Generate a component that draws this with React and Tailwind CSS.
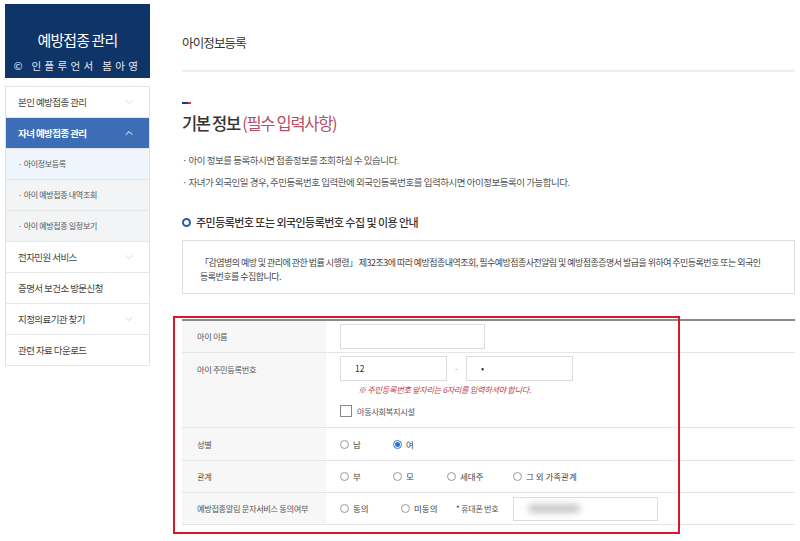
import { ChevronDown, ChevronUp } from 'lucide-react';

const font = { fontFamily: '"Noto Sans CJK KR", "Noto Sans", sans-serif' };

const menu = [
  { label: '본인 예방접종 관리', chevron: 'down' },
  { label: '자녀 예방접종 관리', chevron: 'up', active: true },
  { label: '아이정보등록', sub: true, current: true },
  { label: '아이 예방접종 내역조회', sub: true },
  { label: '아이 예방접종 일정보기', sub: true },
  { label: '전자민원 서비스', chevron: 'down' },
  { label: '증명서 보건소 방문신청' },
  { label: '지정의료기관 찾기', chevron: 'down' },
  { label: '관련 자료 다운로드' },
];

const Sidebar = () => (
  <aside className="w-[145px] shrink-0">
    <div className="h-[74px] bg-[#0f3568] flex flex-col items-center text-white">
      <div className="mt-[26px] text-[15px] leading-[20px] tracking-[-0.06em]">예방접종 관리</div>
      <div className="mt-[9px] text-[10.5px] leading-[14px] tracking-[0.32em] text-[#e4e9f1] whitespace-nowrap">© 인플루언서 봄아영</div>
    </div>
    <ul className="mt-[8px] border border-[#e3e3e3] border-b-0">
      {menu.map((m) => (
        <li
          key={m.label}
          className={
            'h-[31px] flex items-center justify-between border-b border-[#e6e6e6] ' +
            (m.active
              ? 'bg-[#3d6db5] text-white font-bold pl-[12px] pr-[14px] text-[9.5px] tracking-[-0.06em]'
              : m.sub
              ? (m.current ? 'bg-[#eef5fc]' : 'bg-[#f3f4f6]') + ' pl-[12px] text-[8px] text-[#555] tracking-[-0.04em]'
              : 'bg-white pl-[12px] pr-[14px] text-[9.5px] text-[#444] tracking-[-0.06em]')
          }
        >
          <span>{m.sub ? '· ' : ''}{m.label}</span>
          {m.chevron === 'down' && <ChevronDown size={12} strokeWidth={1} className="text-[#b5b5b5]" />}
          {m.chevron === 'up' && <ChevronUp size={12} strokeWidth={2} className="text-white" />}
        </li>
      ))}
    </ul>
  </aside>
);

const Radio = ({ checked, label, w }) => (
  <label className={'flex items-center gap-[4px] ' + w}>
    <span
      className={
        'w-[9px] h-[9px] rounded-full border flex items-center justify-center bg-white ' +
        (checked ? 'border-[#3b74c9]' : 'border-[#999]')
      }
    >
      {checked && <span className="w-[5px] h-[5px] rounded-full bg-[#2f6fd0]" />}
    </span>
    <span className="text-[8.5px] text-[#444]">{label}</span>
  </label>
);

const Row = ({ label, h, top, children }) => (
  <div className={'flex border-b border-[#e5e5e5] ' + h}>
    <div
      className={
        'w-[144px] shrink-0 bg-[#f7f7f7] pl-[15px] text-[8.2px] text-[#555] tracking-[-0.04em] flex ' +
        (top ? 'items-start pt-[10px] leading-[12px]' : 'items-center')
      }
    >
      {label}
    </div>
    <div className="flex-1 pl-[14px] flex flex-col justify-center">{children}</div>
  </div>
);

const Box = ({ w, children }) => (
  <div className={'h-[25px] border border-[#dcdcdc] bg-white flex items-center ' + w}>{children}</div>
);

export default function App() {
  return (
    <div className="w-[800px] h-[541px] bg-white flex pt-[4px] pl-[5px] overflow-hidden" style={font}>
      <Sidebar />
      <main className="ml-[32px] w-[613px]">
        <div className="h-[68px] pt-[30px] text-[12.5px] leading-[18px] text-[#333] tracking-[-0.07em] border-b-2 border-[#efefef]">
          아이정보등록
        </div>
        <div className="mt-[30px] flex h-[2px] w-[9px]">
          <span className="w-[6px] bg-[#1c3a78]" />
          <span className="w-[3px] bg-[#d8323c]" />
        </div>
        <h2 className="mt-[8px] text-[16.5px] leading-[22px] tracking-[-0.08em] text-[#333] font-medium">
          기본 정보 <span className="text-[#b84d63] font-normal">(필수 입력사항)</span>
        </h2>
        <div className="mt-[15px] text-[9.5px] text-[#555] tracking-[-0.05em]">
          <p className="leading-[22px]">· 아이 정보를 등록하시면 접종정보를 조회하실 수 있습니다.</p>
          <p className="leading-[22px]">· 자녀가 외국인일 경우, 주민등록번호 입력란에 외국인등록번호를 입력하시면 아이정보등록이 가능합니다.</p>
        </div>
        <div className="mt-[20px] flex items-center gap-[5px] leading-[18px]">
          <span className="w-[9px] h-[9px] rounded-full border-2 border-[#2c5aa5]" />
          <span className="text-[11px] text-[#333] font-medium tracking-[-0.05em]">주민등록번호 또는 외국인등록번호 수집 및 이용 안내</span>
        </div>
        <div className="mt-[9px] h-[54px] border border-[#dedede] pl-[17px] pt-[15px] text-[9px] leading-[14px] text-[#444] tracking-[-0.06em] whitespace-nowrap">
          「감염병의 예방 및 관리에 관한 법률 시행령」 제32조3에 따라 예방접종내역조회, 필수예방접종사전알림 및 예방접종증명서 발급을 위하여 주민등록번호 또는 외국인
          <br />
          등록번호를 수집합니다.
        </div>

        <div className="relative mt-[25px] border-t-2 border-[#8a8a8a]">
          <Row label="아이 이름" h="h-[32px]">
            <Box w="w-[145px]" />
          </Row>
          <Row label="아이 주민등록번호" h="h-[75px]" top>
            <div className="flex flex-col justify-start h-full pt-[3px]">
              <div className="flex items-center">
                <Box w="w-[107px]">
                  <span className="pl-[14px] text-[8.5px] text-[#333]">12</span>
                </Box>
                <span className="w-[19px] text-center text-[8px] text-[#999]">-</span>
                <Box w="w-[107px]">
                  <span className="pl-[14px] text-[9px] text-[#333]">•</span>
                </Box>
              </div>
              <p className="pl-[18px] mt-[2px] text-[8.2px] leading-[12px] italic text-[#c23b4b] tracking-[-0.04em]">
                ※ 주민등록번호 앞자리는 6자리를 입력하셔야 합니다.
              </p>
              <div className="mt-[10px] flex items-center gap-[5px]">
                <span className="w-[12px] h-[12px] border border-[#888] bg-white" />
                <span className="text-[8.2px] text-[#555] tracking-[-0.04em]">아동사회복지시설</span>
              </div>
            </div>
          </Row>
          <Row label="성별" h="h-[33px]">
            <div className="flex">
              <Radio label="남" w="w-[53px]" />
              <Radio label="여" checked w="w-[53px]" />
            </div>
          </Row>
          <Row label="관계" h="h-[32px]">
            <div className="flex">
              <Radio label="부" w="w-[53px]" />
              <Radio label="모" w="w-[54px]" />
              <Radio label="세대주" w="w-[66px]" />
              <Radio label="그 외 가족관계" w="w-[90px]" />
            </div>
          </Row>
          <Row label="예방접종알림 문자서비스 동의여부" h="h-[32px]">
            <div className="flex items-center">
              <Radio label="동의" w="w-[61px]" />
              <Radio label="미동의" w="w-[55px]" />
              <span className="w-[57px] text-[8.2px] text-[#555] tracking-[-0.04em]">* 휴대폰 번호</span>
              <div className="h-[24px] w-[145px] border border-[#dcdcdc] bg-white flex items-center pl-[14px]">
                <span className="w-[52px] h-[9px] rounded-full bg-[#c9c9c9] blur-[3px]" />
              </div>
            </div>
          </Row>
          <div className="absolute left-[-9px] top-[-5px] w-[507px] h-[218px] border-2 border-[#d7192b] pointer-events-none" />
        </div>
      </main>
    </div>
  );
}
